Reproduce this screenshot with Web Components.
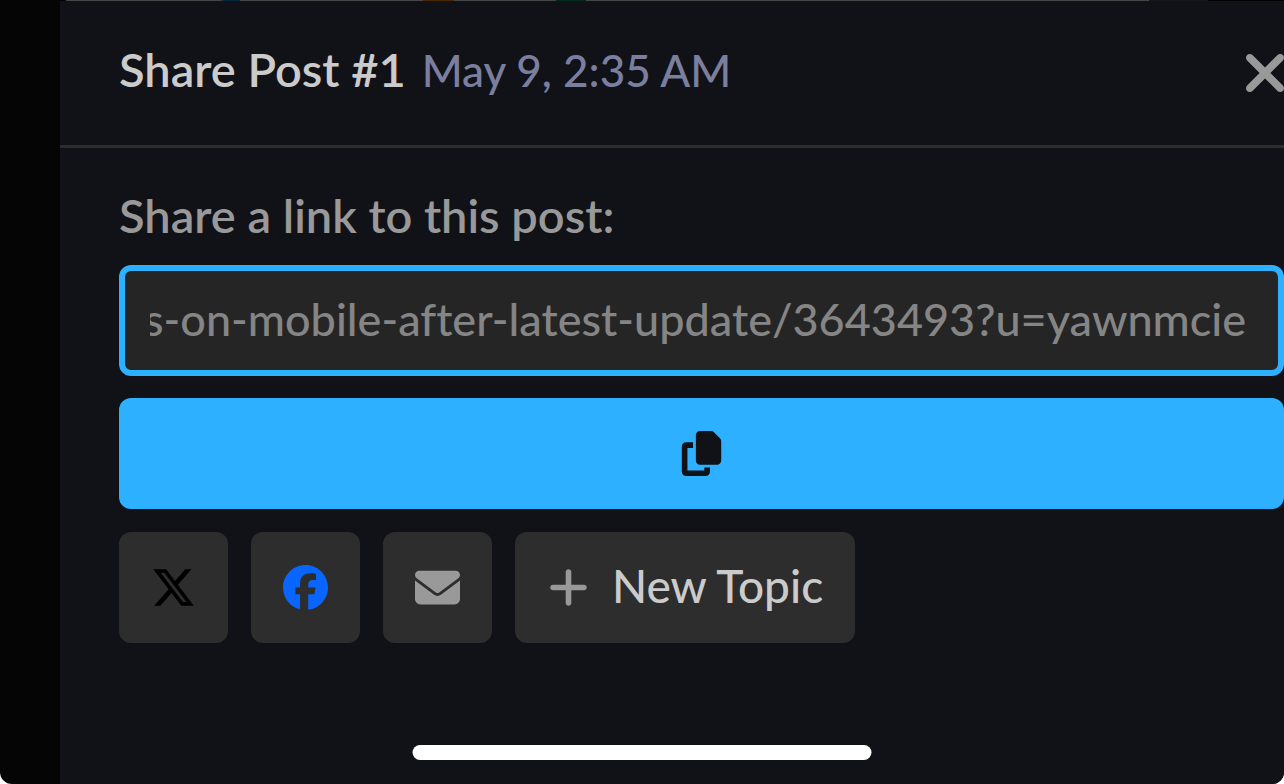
<!DOCTYPE html>
<html lang="en">
<head>
<meta charset="utf-8">
<meta name="viewport" content="width=device-width, initial-scale=1">
<title>Share Post</title>
<style>
  html {
    background: #fff;
  }

  body {
    margin: 0;
    font-family: Lato, "Liberation Sans", sans-serif;
    font-size: 45px;
    line-height: 54px;
    font-variant-ligatures: none;
    --surface: #111217;
    --accent: #2db0ff;
    --button: #2d2d2d;
    --text: #cbcbcb;
    --muted: #999;
    --date: #7b7f9f;
    --heading-size: 47px;
  }
</style>
</head>
<body>
<share-screen>
  <share-modal>
    <span slot="title">Share Post #1</span>
    <time slot="date">May 9, 2:35 AM</time>
    <share-link label="Share a link to this post:" value="s-on-mobile-after-latest-update/3643493?u=yawnmcie"></share-link>
    <share-button variant="primary" icon="copy" label="Copy link"></share-button>
    <share-sources>
      <share-button icon="x" label="Share on X"></share-button>
      <share-button icon="facebook" label="Share on Facebook"></share-button>
      <share-button icon="envelope" label="Share by email"></share-button>
      <share-button icon="plus">New Topic</share-button>
    </share-sources>
  </share-modal>
</share-screen>

<script>
const ICONS = {
  close: {
    box: '32 96 320 320',
    path: 'M342.6 150.6c12.5-12.5 12.5-32.8 0-45.3s-32.8-12.5-45.3 0L192 210.7 86.6 105.4c-12.5-12.5-32.8-12.5-45.3 0s-12.5 32.8 0 45.3L146.7 256 41.4 361.4c-12.5 12.5-12.5 32.8 0 45.3s32.8 12.5 45.3 0L192 301.3 297.4 406.6c12.5 12.5 32.8 12.5 45.3 0s12.5-32.8 0-45.3L237.3 256 342.6 150.6z'
  },
  copy: {
    box: '0 0 448 512',
    path: 'M208 0H332.1c12.7 0 24.9 5.1 33.9 14.1l67.9 67.9c9 9 14.1 21.2 14.1 33.9V336c0 26.5-21.5 48-48 48H208c-26.5 0-48-21.5-48-48V48c0-26.5 21.5-48 48-48zM48 128h80v64H64V448H256V416h64v48c0 26.5-21.5 48-48 48H48c-26.5 0-48-21.5-48-48V176c0-26.5 21.5-48 48-48z'
  },
  x: {
    box: '0 0 512 512',
    path: 'M389.2 48h70.6L305.6 224.2 487 464H345L233.7 318.6 106.5 464H35.8L200.7 275.5 26.8 48H172.4L272.9 180.9 389.2 48zM364.4 421.8h39.1L151.1 88h-42L364.4 421.8z'
  },
  facebook: {
    box: '0 0 512 512',
    path: 'M512 256C512 114.6 397.4 0 256 0S0 114.6 0 256C0 376 82.7 476.8 194.2 504.5V334.2H141.4V256h52.8V222.3c0-87.1 39.4-127.5 125-127.5c16.2 0 44.2 3.2 55.7 6.4V172c-6-.6-16.5-1-29.6-1c-42 0-58.2 15.9-58.2 57.2V256h83.6l-14.4 78.2H287V510.1C413.8 494.8 512 386.9 512 256h0z'
  },
  envelope: {
    box: '0 0 512 512',
    path: 'M48 64C21.5 64 0 85.5 0 112c0 15.1 7.1 29.3 19.2 38.4L236.8 313.6c11.4 8.5 27 8.5 38.4 0L492.8 150.4c12.1-9.1 19.2-23.3 19.2-38.4c0-26.5-21.5-48-48-48H48zM0 176V384c0 35.3 28.7 64 64 64H448c35.3 0 64-28.7 64-64V176L294.4 339.2c-22.8 17.1-54 17.1-76.8 0L0 176z'
  },
  plus: {
    box: '0 0 448 512',
    path: 'M256 80c0-17.7-14.3-32-32-32s-32 14.3-32 32V224H48c-17.7 0-32 14.3-32 32s14.3 32 32 32H192V432c0 17.7 14.3 32 32 32s32-14.3 32-32V288H400c17.7 0 32-14.3 32-32s-14.3-32-32-32H256V80z'
  }
};

function icon(name) {
  const { box, path } = ICONS[name];
  return `<svg class="${name}" viewBox="${box}" fill="currentColor" aria-hidden="true"><path d="${path}"/></svg>`;
}

class ShareScreen extends HTMLElement {
  constructor() {
    super();
    this.attachShadow({ mode: 'open' });
  }

  connectedCallback() {
    this.shadowRoot.innerHTML = `
      <style>
        :host {
          display: grid;
          grid-template-columns: 60px minmax(0, 1fr);
          min-height: 100vh;
          overflow: hidden;
          background: #050506;
          border-radius: 0 0 12px 12px;
        }

        main {
          grid-column: 2;
          display: grid;
        }

        /* system home bar, floats over the page */
        .home-bar {
          position: fixed;
          left: 50%;
          bottom: 24px;
          width: 459px;
          height: 15px;
          transform: translateX(-50%);
          border-radius: 8px;
          background: #fff;
        }
      </style>
      <main><slot></slot></main>
      <div class="home-bar"></div>
    `;
  }
}

class ShareModal extends HTMLElement {
  constructor() {
    super();
    this.attachShadow({ mode: 'open' });
  }

  connectedCallback() {
    this.shadowRoot.innerHTML = `
      <style>
        :host {
          display: block;
          background: var(--surface);
        }

        /* sliver of the dimmed page above the modal */
        .backdrop {
          height: 1px;
          background: linear-gradient(to right,
            #000 6px, #454746 6px 160px, #00283f 164px 180px,
            #454746 180px 363px, #4a2700 363px 394px,
            #454746 394px 496px, #002c16 496px 526px,
            #454746 526px 1089px, #15171a 1089px 1148px, #000 1148px);
        }

        header {
          display: flex;
          align-items: center;
          justify-content: space-between;
          padding: 43px 0 44px 59px;
          border-bottom: 3px solid #2d2d2d;
        }

        h1 {
          display: flex;
          align-items: baseline;
          gap: 16px;
          margin: 0;
          padding-bottom: 6px;
          font-size: var(--heading-size);
          line-height: 50px;
          font-weight: 600;
          color: var(--text);
        }

        ::slotted(time) {
          font-size: 44px;
          font-weight: 500;
          color: var(--date);
        }

        .dismiss {
          display: flex;
          padding: 0;
          border: 0;
          background: none;
          color: var(--muted);
        }

        svg {
          width: 38px;
          height: 38px;
        }

        .body {
          display: flex;
          flex-direction: column;
          gap: 22px;
          padding: 40px 0 0 59px;
        }
      </style>
      <div class="backdrop"></div>
      <header>
        <h1><slot name="title"></slot><slot name="date"></slot></h1>
        <button class="dismiss" type="button" aria-label="Close">${icon('close')}</button>
      </header>
      <div class="body"><slot></slot></div>
    `;
  }
}

class ShareLink extends HTMLElement {
  constructor() {
    super();
    this.attachShadow({ mode: 'open' });
  }

  connectedCallback() {
    this.shadowRoot.innerHTML = `
      <style>
        :host {
          display: flex;
          flex-direction: column;
          gap: 23px;
        }

        label {
          font-size: var(--heading-size);
          font-weight: 600;
          color: var(--muted);
        }

        input {
          box-sizing: border-box;
          width: 100%;
          height: 111px;
          margin: 0;
          padding: 0 32px 4px 25px;
          border: 6px solid var(--accent);
          border-radius: 12px;
          outline: 0;
          background: #252525;
          color: #858585;
          font: inherit;
          font-weight: 500;
          font-variant-ligatures: none;
        }
      </style>
      <label for="link">${this.getAttribute('label')}</label>
      <input id="link" type="text" readonly value="${this.getAttribute('value')}">
    `;

    // keep the end of the link in view
    const input = this.shadowRoot.querySelector('input');
    input.scrollLeft = input.scrollWidth;
  }
}

class ShareSources extends HTMLElement {
  constructor() {
    super();
    this.attachShadow({ mode: 'open' });
  }

  connectedCallback() {
    this.shadowRoot.innerHTML = `
      <style>
        :host {
          display: flex;
          flex-wrap: wrap;
          gap: 23px;
          padding-top: 1px;
        }
      </style>
      <slot></slot>
    `;
  }
}

class ShareButton extends HTMLElement {
  constructor() {
    super();
    this.attachShadow({ mode: 'open' });
  }

  connectedCallback() {
    const label = this.getAttribute('label');
    this.shadowRoot.innerHTML = `
      <style>
        :host {
          display: block;
        }

        button {
          display: flex;
          align-items: center;
          justify-content: center;
          gap: 22px;
          width: 100%;
          height: 111px;
          padding: 0 32px;
          border: 0;
          border-radius: 12px;
          background: var(--button);
          color: var(--text);
          font: inherit;
          font-size: 46px;
          font-weight: 500;
        }

        :host([variant="primary"]) button {
          background: var(--accent);
        }

        /* only buttons without a label attribute carry text */
        :host(:not([label])) slot {
          display: block;
          padding-bottom: 4px;
        }

        svg {
          width: 45px;
          height: 45px;
          color: var(--muted);
        }

        .copy { color: var(--surface); }
        .x { color: #000; }
        .facebook { color: #0866ff; }
        .plus { width: 43px; }
      </style>
      <button type="button"${label ? ` aria-label="${label}"` : ''}>${icon(this.getAttribute('icon'))}<slot></slot></button>
    `;
  }
}

customElements.define('share-screen', ShareScreen);
customElements.define('share-modal', ShareModal);
customElements.define('share-link', ShareLink);
customElements.define('share-sources', ShareSources);
customElements.define('share-button', ShareButton);
</script>
</body>
</html>
